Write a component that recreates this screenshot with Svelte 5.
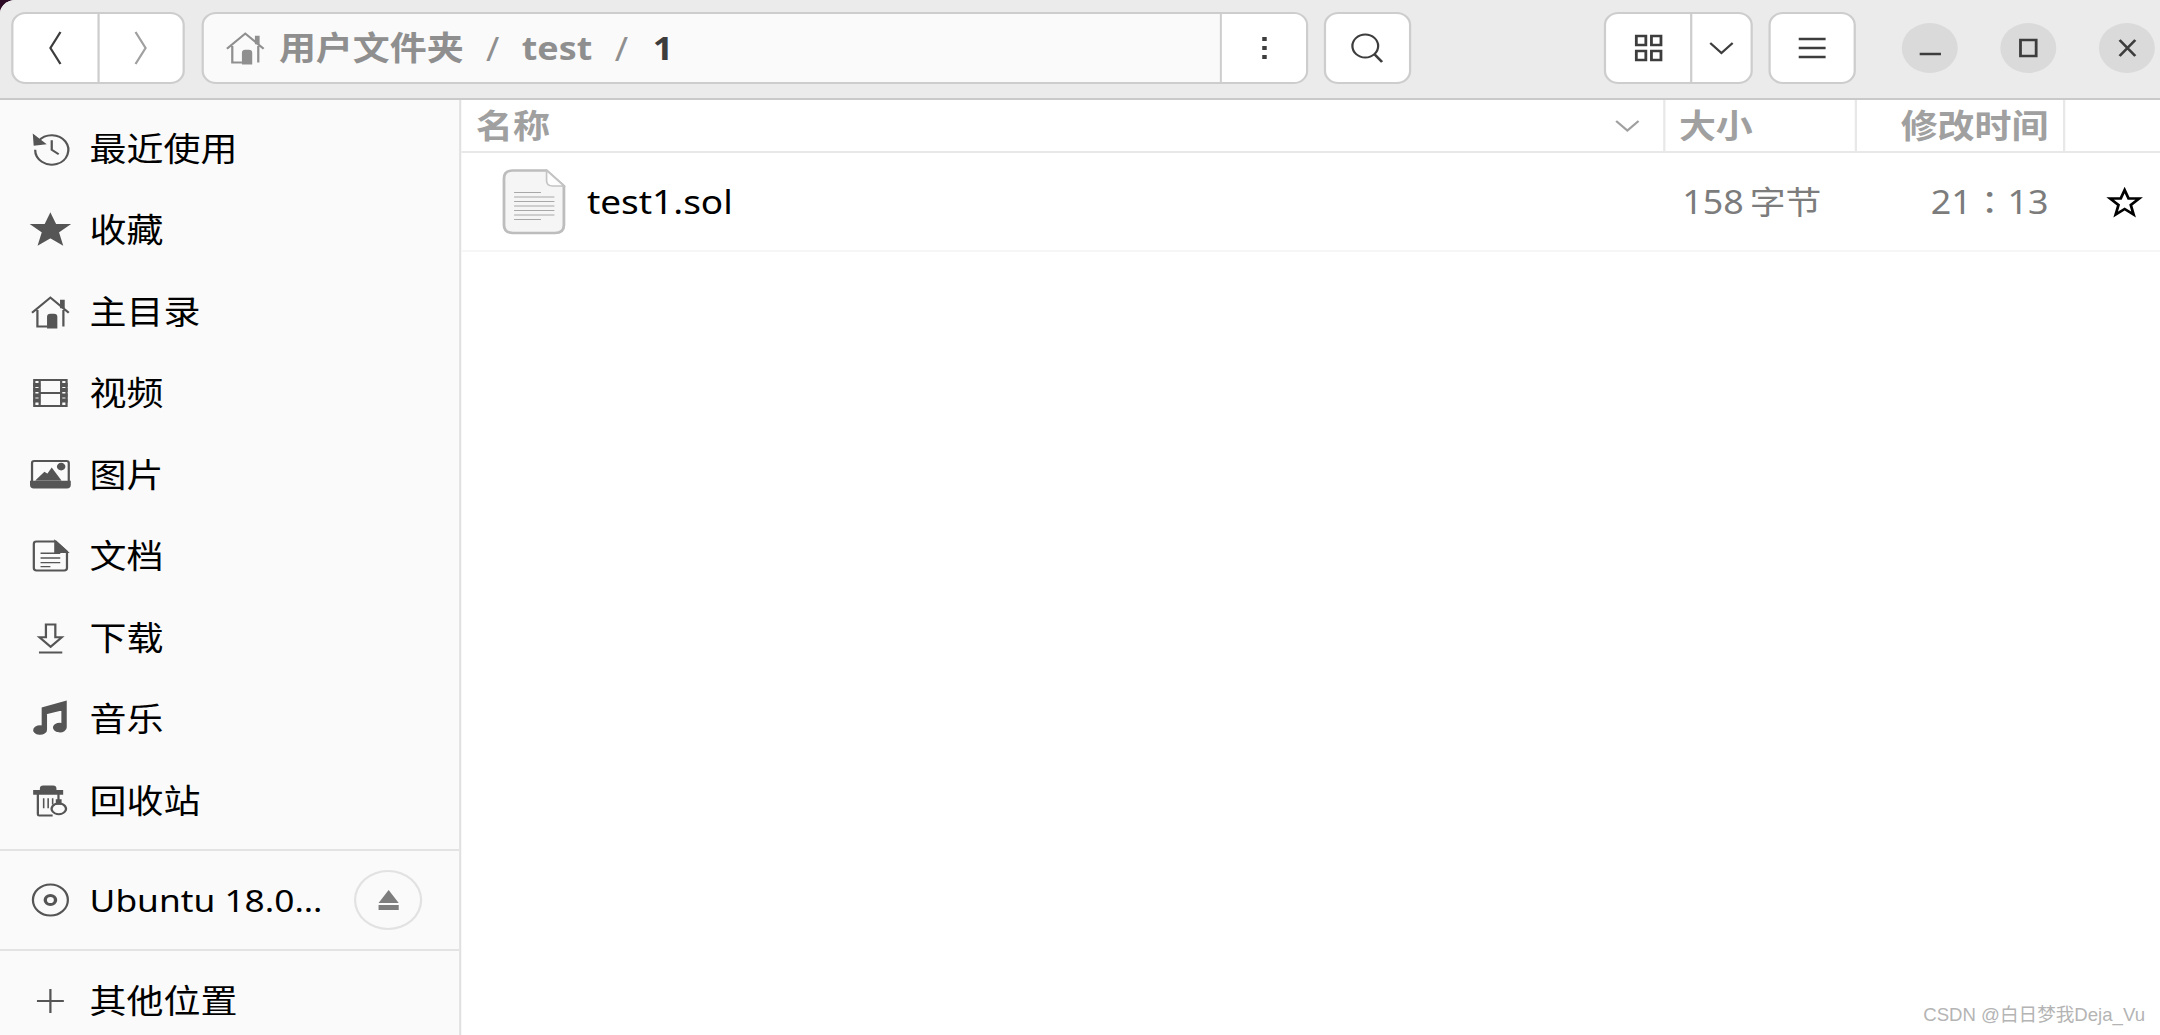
<script>
	// the screenshot is stretched horizontally by 1.12, so the window is laid out
	// at 1928.6px wide and scaled on x (see .window)
	const home = {
		line: 'M-.2 8.400L8 .8l8.200 7.600M2.200 7v8.300h4.300M13.800 7v8.300',
		fill: 'M7 10.400q0-1 1-1h1.600q1 0 1 1v5.400H7zM12.800 2.400h1.100v3.200h-1.100z'
	};

	const places = [
		{
			label: '最近使用',
			line: 'M2.700 4A7.400 7.400 0 1 1 1.200 8.400M8.600 3.600v4.800l3.100 2.200',
			fill: 'M.7 1.400l.3 4.400 4.200-.5z'
		},
		{ label: '收藏', fill: 'M8 .4l2.200 5.100h5.600l-4.500 3.500 1.600 5.700L8 11.600l-4.900 3.100 1.600-5.700L.2 5.500h5.600z' },
		{ label: '主目录', ...home },
		{
			label: '视频',
			line: 'M.8 1.500h14.400v13H.8zM3.200 1.500v13M12.800 1.500v13M3.200 8h9.600',
			fill: 'M.8 3.500H3v1H.8zM.8 6H3v1H.8zM.8 8.800H3v1H.8zM.8 11.300H3v1H.8zM13 3.500h2.200v1H13zM13 6h2.200v1H13zM13 8.800h2.200v1H13zM13 11.300h2.200v1H13z'
		},
		{
			label: '图片',
			line: 'M.8 1h14.400q1 0 1 1v10H-.2V2q0-1 1-1z',
			fill: 'M-.6 11.400h17.200V13q0 1.200-1.200 1.200H.6Q-.6 14.200-.6 13zM2.400 10.200L5.400 7l1.400 1 1.800-2.800 3.400 5zM12.800 2.400a1.300 1.300 0 1 1 0 2.800 1.300 1.300 0 0 1 0-2.800z'
		},
		{
			label: '文档',
			line: 'M1.800.8h8.600l5 5V14q0 1.200-1.200 1.200H1.800q-1.200 0-1.200-1.200V2Q.6.8 1.800.8z',
			thin: 'M3.600 6.600h8.800M3.600 9h8.800M3.600 11.300h8.800M3.600 13.300h4.400',
			fill: 'M10.200.8l5.200 5.200h-5.200z'
		},
		{
			label: '下载',
			line: 'M6 1.200h4.200v6.400h2.900L8.100 12.400 3.100 7.600H6zM2.900 15.300h10.400'
		},
		{
			label: '音乐',
			fill: 'M4.600 2.600L14.800-.6v12.800a2.600 1.900 0 1 1-1.400-1.600V3.200L6 5.200v8.200a2.600 1.900 0 1 1-1.400-1.600z'
		},
		{
			label: '回收站',
			line: 'M2.400 4.200v10.400q0 .6.6.6h6M11.600 4.200v3.400M11.800 9.200a3.200 2.700 0 1 1-.1 0z',
			thin: 'M5 6.600v5M7 6.600v5M9 6.600v3.200',
			fill: 'M.8 3h12.400v1.400H.8zM4.800 .8h4.400q1 0 1 1V3H3.800V1.800q0-1 1-1zM10.900 7.600h1.600v1.800h-1.600z'
		}
	];

	const columns = ['大小', '修改时间'];
</script>

<div class="window">
	<header class="toolbar">
		<div class="group nav">
			<button aria-label="后退">
				<svg width="13" height="34" viewBox="0 0 13 34"><path class="ln dark" d="M11 1L2 17l9 16" /></svg>
			</button>
			<button aria-label="前进">
				<svg width="13" height="34" viewBox="0 0 13 34"><path class="ln soft" d="M2 1l9 16-9 16" /></svg>
			</button>
		</div>

		<div class="group path">
			<div class="crumbs">
				<svg class="ico" viewBox="0 0 16 16">
					<path class="ln grey" d={home.line} />
					<path class="fl grey" d={home.fill} />
				</svg>
				<span class="crumb">用户文件夹</span>
				<span class="slash">/</span>
				<span class="crumb word">test</span>
				<span class="slash">/</span>
				<span class="crumb current">1</span>
			</div>
			<button class="kebab" aria-label="菜单">
				<svg width="6" height="24" viewBox="0 0 6 24">
					<rect x="1" y="1" width="4" height="4" /><rect x="1" y="10" width="4" height="4" /><rect x="1" y="19" width="4" height="4" />
				</svg>
			</button>
		</div>

		<button class="single search" aria-label="搜索">
			<svg width="30" height="30" viewBox="0 0 30 30">
				<circle class="ln dark" cx="13" cy="13" r="11.500" />
				<path class="ln medium" d="M21 21l7 8" />
			</svg>
		</button>

		<div class="group view">
			<button class="grid-btn" aria-label="视图">
				<svg width="24" height="26" viewBox="0 0 24 26">
					<rect class="ln medium" x="1" y="1" width="8.500" height="9" />
					<rect class="ln medium" x="14.500" y="1" width="8.500" height="9" />
					<rect class="ln medium" x="1" y="16" width="8.500" height="9" />
					<rect class="ln medium" x="14.500" y="16" width="8.500" height="9" />
				</svg>
			</button>
			<button class="drop" aria-label="视图选项">
				<svg width="22" height="13" viewBox="0 0 22 13"><path class="ln dark" d="M1 1l10 10L21 1" /></svg>
			</button>
		</div>

		<button class="single menu" aria-label="主菜单">
			<svg width="24" height="20" viewBox="0 0 24 20"><path class="ln medium" d="M0 1h24M0 10h24M0 19h24" /></svg>
		</button>

		<div class="controls">
			<button aria-label="最小化">
				<svg width="19" height="20" viewBox="0 0 19 20"><path class="ln medium" d="M0 16h19" /></svg>
			</button>
			<button aria-label="最大化">
				<svg width="16" height="18" viewBox="0 0 16 18"><rect class="ln medium" x="1" y="1" width="14" height="16" /></svg>
			</button>
			<button aria-label="关闭">
				<svg width="17" height="18" viewBox="0 0 17 18"><path class="ln medium" d="M1.500 1l14 16M15.500 1l-14 16" /></svg>
			</button>
		</div>
	</header>

	<div class="body">
		<aside class="sidebar">
			<ul class="places">
				{#each places as place}
					<li>
						<svg class="ico" viewBox="0 0 16 16">
							{#if place.line}<path class="ln side" d={place.line} />{/if}
							{#if place.thin}<path class="ln side hair" d={place.thin} />{/if}
							{#if place.fill}<path class="fl side" d={place.fill} />{/if}
						</svg>
						<span>{place.label}</span>
					</li>
				{/each}
			</ul>
			<div class="device">
				<svg class="ico" viewBox="0 0 16 16">
					<circle class="ln side" cx="8" cy="8" r="7.800" />
					<circle class="ln side wide" cx="8" cy="8" r="2.300" />
				</svg>
				<span class="latin">Ubuntu 18.0…</span>
				<button class="eject" aria-label="弹出">
					<svg width="18" height="20" viewBox="0 0 18 20"><path class="fl eject-ico" d="M9 0l9 13H0zM0 15h18v5H0z" /></svg>
				</button>
			</div>
			<div class="other">
				<svg class="ico" viewBox="0 0 16 16"><path class="ln side" d="M2 8h12M8 2v12" /></svg>
				<span>其他位置</span>
			</div>
		</aside>

		<main class="files">
			<div class="row head">
				<div class="cell name-col">
					<span>名称</span>
					<svg width="22" height="12" viewBox="0 0 22 12"><path class="ln soft" d="M1 1l10 9.500L21 1" /></svg>
				</div>
				<div class="cell size-col"><span>{columns[0]}</span></div>
				<div class="cell time-col"><span>{columns[1]}</span></div>
				<div class="cell"></div>
			</div>
			<div class="row file">
				<div class="name-col">
					<svg class="doc" width="56" height="66" viewBox="0 0 56 66">
						<path class="sheet" d="M9 1.500h30l15.500 15.500v39q0 8-8 8H9q-8 0-8-8v-46.500q0-8 8-8z" />
						<path class="corner" d="M39 1.500v10q0 5.500 5.500 5.500h10z" />
						<path class="lines" d="M10 23.500h24M10 28h36M10 32.500h36M10 37h36M10 41.500h36M10 46h36M10 50.500h24" />
					</svg>
					<span class="filename">test1.sol</span>
				</div>
				<div class="size-col meta">158 字节</div>
				<div class="time-col meta">21：13</div>
				<div class="star-col">
					<svg width="30" height="30" viewBox="0 0 30 30">
						<path class="outline" d="M15 3l3.500 8.500h9.500l-7.500 6.500 2.500 9.500-8-5.500-8 5.500 2.500-9.500L2 11.500h9.500z" />
					</svg>
				</div>
			</div>
		</main>
	</div>
</div>

<div class="watermark">CSDN @白日梦我Deja_Vu</div>

<style>
	:global(body) {
		background: #2c0a26;
		overflow: hidden;
	}

	.window {
		width: 1928.6px;
		height: 1035px;
		transform: scaleX(1.12);
		transform-origin: 0 0;
		display: flex;
		flex-direction: column;
		font-family: 'Noto Sans', 'Noto Sans CJK SC', sans-serif;
		font-size: 33px;
		color: #111;
		background: #fff;
		border-top-left-radius: 14px;
		overflow: hidden;
	}

	button {
		padding: 0;
		margin: 0;
		border: 0;
		background: none;
		display: flex;
		align-items: center;
		justify-content: center;
		font: inherit;
	}

	svg {
		display: block;
		flex: none;
		overflow: visible;
	}

	.ln {
		fill: none;
		stroke-width: 1;
	}
	.fl {
		stroke: none;
	}
	.dark {
		stroke: #3d3d3d;
		stroke-width: 2;
	}
	.soft {
		stroke: #a0a0a0;
		stroke-width: 2;
	}
	.medium {
		stroke: #3d3d3d;
		stroke-width: 2.500;
	}
	.grey {
		stroke: #8f8f8f;
	}
	.fl.grey {
		fill: #8f8f8f;
	}
	.side {
		stroke: #555;
	}
	.fl.side {
		fill: #555;
	}
	.hair {
		stroke-width: 0.700;
	}
	.wide {
		stroke-width: 1.500;
	}
	.eject-ico {
		fill: #7d7d7d;
	}

	/* toolbar */
	.toolbar {
		flex: none;
		height: 100px;
		box-sizing: border-box;
		padding: 12px 0 0 10px;
		display: flex;
		align-items: flex-start;
		background: #ebebeb;
		border-bottom: 2px solid #c9c9c9;
	}

	.group,
	.single {
		box-sizing: border-box;
		height: 72px;
		display: flex;
		background: #fff;
		border: 2px solid #cdcdcd;
		border-radius: 13px;
	}

	.nav {
		width: 155px;
	}
	.nav button {
		flex: 1;
	}
	.nav button + button {
		border-left: 2px solid #cdcdcd;
	}

	.path {
		width: 988px;
		margin-left: 15px;
		background: #fafafa;
	}
	.crumbs {
		flex: 1;
		display: flex;
		align-items: center;
		gap: 20px;
		padding-left: 21px;
		font-weight: 700;
		color: #8f8f8f;
	}
	.crumbs .ico {
		margin-right: -6px;
	}
	.crumb {
		line-height: 40px;
	}
	.word {
		font-size: 32px;
	}
	.slash {
		font-size: 32px;
		font-weight: 400;
		color: #8f8f8f;
	}
	.current {
		margin-left: 2px;
		font-size: 32px;
		color: #3d3d3d;
	}
	.kebab {
		width: 77px;
		background: #fff;
		border-left: 2px solid #cdcdcd;
		border-radius: 0 11px 11px 0;
	}
	.kebab rect {
		fill: #3d3d3d;
	}

	.search {
		width: 78px;
		margin-left: 14px;
	}

	.view {
		width: 133px;
		margin-left: 172px;
	}
	.grid-btn {
		width: 75px;
	}
	.drop {
		flex: 1;
		border-left: 2px solid #cdcdcd;
	}

	.menu {
		width: 78px;
		margin-left: 14px;
	}

	.controls {
		display: flex;
		gap: 38px;
		margin: 11px 0 0 41px;
	}
	.controls button {
		width: 50px;
		height: 50px;
		border-radius: 50%;
		background: #dadada;
	}

	/* sidebar */
	.body {
		flex: 1;
		min-height: 0;
		display: flex;
	}

	.sidebar {
		flex: none;
		width: 412px;
		box-sizing: border-box;
		background: #fafafa;
		border-right: 2px solid #e0e0e0;
		color: #000;
	}

	.places {
		list-style: none;
		margin: 0;
		padding: 8px 0 7px;
		border-bottom: 2px solid #e3e3e3;
	}

	.places li,
	.device,
	.other {
		display: flex;
		align-items: center;
		gap: 19px;
		padding-left: 29px;
		height: 81.500px;
		line-height: 40px;
	}

	.ico {
		width: 32px;
		height: 32px;
	}

	.device {
		height: 98px;
		border-bottom: 2px solid #e3e3e3;
	}
	.latin {
		font-size: 31.500px;
		width: 205px;
		white-space: nowrap;
	}
	.eject {
		width: 61px;
		height: 60px;
		margin-left: 12px;
		box-sizing: border-box;
		border: 2px solid #e2e2e2;
		border-radius: 50%;
	}
	.other {
		margin-top: 10px;
	}

	/* file list */
	.files {
		flex: 1;
		min-width: 0;
		background: #fff;
	}

	.row {
		display: grid;
		grid-template-columns: 1075px 171px 186px 1fr;
		align-items: center;
	}

	.head {
		height: 51px;
		align-items: stretch;
		border-bottom: 2px solid #e8e8e8;
		font-weight: 700;
		color: #a0a0a0;
	}
	.cell {
		display: flex;
		align-items: center;
		box-sizing: border-box;
		border-right: 2px solid #e8e8e8;
		line-height: 40px;
	}
	.cell:last-child {
		border-right: 0;
	}
	.head .name-col {
		justify-content: space-between;
		padding: 0 21px 0 13px;
	}
	.head .size-col {
		padding-left: 12px;
	}
	.head .time-col {
		justify-content: flex-end;
		padding-right: 13px;
	}

	.file {
		height: 97px;
		border-bottom: 2px solid #f6f6f6;
	}
	.file .name-col {
		display: flex;
		align-items: center;
		gap: 19px;
		padding-left: 37px;
	}
	.filename {
		color: #000;
		line-height: 40px;
	}
	.meta {
		color: #7c7c7c;
		font-size: 32px;
		line-height: 40px;
		white-space: nowrap;
	}
	.size-col.meta {
		padding-left: 15px;
		word-spacing: -3px;
	}
	.time-col.meta {
		font-family: 'Noto Sans', 'Noto Sans CJK TC', sans-serif;
		text-align: right;
		padding-right: 15px;
	}
	.star-col {
		padding-left: 38px;
	}
	.outline {
		fill: none;
		stroke: #000;
		stroke-width: 2.500;
	}

	.sheet {
		fill: #f5f5f5;
		stroke: #bdbdbd;
		stroke-width: 2.500;
	}
	.corner {
		fill: #fdfdfd;
		stroke: #c4c4c4;
		stroke-width: 1.500;
	}
	.lines {
		fill: none;
		stroke: #a8a8a8;
		stroke-width: 1;
	}

	.watermark {
		position: absolute;
		right: 15px;
		top: 1003px;
		font-family: 'Liberation Sans', 'Noto Sans CJK SC', sans-serif;
		font-size: 18.600px;
		line-height: 24px;
		color: #b4b4b4;
		white-space: nowrap;
	}
</style>
